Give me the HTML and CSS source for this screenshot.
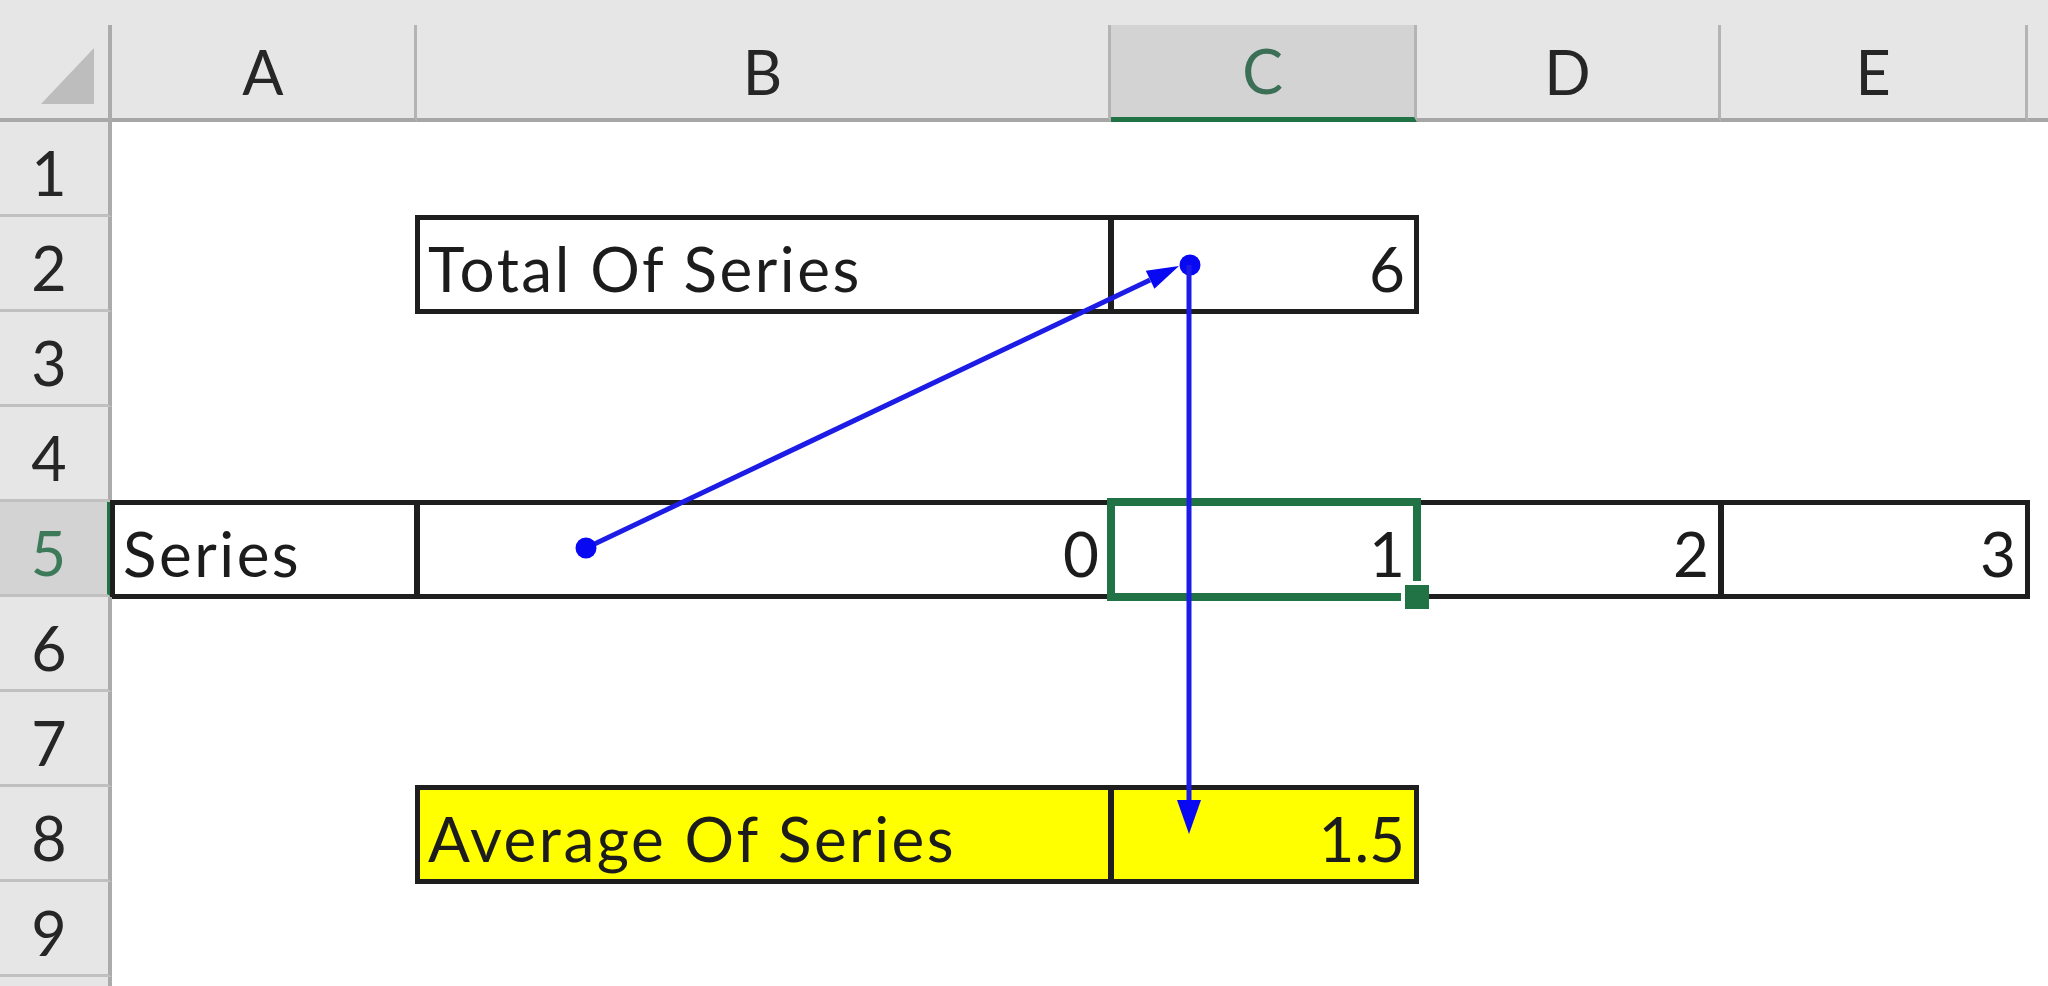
FILE: index.html
```html
<!DOCTYPE html>
<html>
<head>
<meta charset="utf-8">
<title>Sheet</title>
<link rel="stylesheet" href="styles.css">
</head>
<body>
<div class="sheet">
  <div class="topband"></div>
  <div class="grid">
    <div class="corner"><span class="tri"></span></div>
    <div class="ch">A</div>
    <div class="ch">B</div>
    <div class="ch on">C</div>
    <div class="ch">D</div>
    <div class="ch">E</div>
    <div class="ch"></div>

    <div class="rh">1</div>
    <div class="c"></div><div class="c"></div><div class="c"></div><div class="c"></div><div class="c"></div><div class="c"></div>

    <div class="rh">2</div>
    <div class="c"></div><div class="c b">Total Of Series</div><div class="c b n">6</div><div class="c"></div><div class="c"></div><div class="c"></div>

    <div class="rh">3</div>
    <div class="c"></div><div class="c"></div><div class="c"></div><div class="c"></div><div class="c"></div><div class="c"></div>

    <div class="rh">4</div>
    <div class="c"></div><div class="c"></div><div class="c"></div><div class="c"></div><div class="c"></div><div class="c"></div>

    <div class="rh on">5</div>
    <div class="c b">Series</div><div class="c b n">0</div><div class="c n sel">1<span class="handle"></span></div><div class="c b n">2</div><div class="c b n">3</div><div class="c"></div>

    <div class="rh">6</div>
    <div class="c"></div><div class="c"></div><div class="c"></div><div class="c"></div><div class="c"></div><div class="c"></div>

    <div class="rh">7</div>
    <div class="c"></div><div class="c"></div><div class="c"></div><div class="c"></div><div class="c"></div><div class="c"></div>

    <div class="rh">8</div>
    <div class="c"></div><div class="c b y">Average Of Series</div><div class="c b y n">1.5</div><div class="c"></div><div class="c"></div><div class="c"></div>

    <div class="rh">9</div>
    <div class="c"></div><div class="c"></div><div class="c"></div><div class="c"></div><div class="c"></div><div class="c"></div>

    <div class="rh"></div>
    <div class="c"></div><div class="c"></div><div class="c"></div><div class="c"></div><div class="c"></div><div class="c"></div>
  </div>

  <svg class="arrows" width="2048" height="986" viewBox="0 0 2048 986">
    <g fill="#0808f2" stroke="#1c1ce6">
      <line x1="586" y1="548" x2="1150" y2="280" stroke-width="5"/>
      <polygon points="1179,266 1154.4,288.7 1145.8,270.7" stroke="none"/>
      <circle cx="586" cy="548" r="10.5" stroke="none"/>
      <circle cx="1190" cy="265" r="10.5" stroke="none"/>
      <line x1="1189" y1="265" x2="1189" y2="802" stroke-width="5"/>
      <polygon points="1177,800 1201,800 1189,834" stroke="none"/>
    </g>
  </svg>
</div>
</body>
</html>
```

FILE: styles.css
```css
* { box-sizing: border-box; }

html, body {
  margin: 0;
  padding: 0;
}

body {
  width: 2048px;
  height: 986px;
  overflow: hidden;
  background: #ffffff;
  font-family: Lato, "Open Sans", sans-serif;
  color: #1c1c1c;
}

.sheet {
  position: relative;
  width: 2048px;
  height: 986px;
  overflow: hidden;
}

.topband {
  height: 25px;
  background: #e6e6e6;
}

.grid {
  display: grid;
  grid-template-columns: 112px 305px 694px 306px 304px 307px 1fr;
  grid-template-rows: 97px repeat(10, 95px);
}

.corner {
  background: #e6e6e6;
  border-right: 4px solid #ababab;
  border-bottom: 4px solid #a9a9a9;
  display: flex;
  align-items: flex-end;
  justify-content: flex-end;
  padding: 0 14px 14px 0;
}

.tri {
  width: 53px;
  height: 56px;
  background: #bdbdbd;
  clip-path: polygon(100% 0, 100% 100%, 0 100%);
}

.ch {
  background: #e6e6e6;
  border-right: 3px solid #b4b4b4;
  border-bottom: 4px solid #a6a6a6;
  display: flex;
  justify-content: center;
  align-items: flex-end;
  padding-bottom: 16px;
  font-size: 61px;
  line-height: 60px;
  color: #262626;
}

.ch.on {
  background: #d3d3d3;
  border-bottom: 5px solid #217346;
  color: #3b6f56;
}

.rh {
  background: #e6e6e6;
  border-right: 4px solid #ababab;
  border-bottom: 3px solid #c0c0c0;
  display: flex;
  justify-content: center;
  align-items: flex-end;
  padding: 0 10px 11px 0;
  font-size: 61px;
  line-height: 60px;
  color: #262626;
}

.rh.on {
  background: #d3d3d3;
  border-right: 5px solid #217346;
  color: #3c7a5a;
}

.c {
  display: flex;
  align-items: flex-end;
  padding: 0 12px 14px 11px;
  font-size: 62px;
  line-height: 60px;
  letter-spacing: 2.5px;
  white-space: nowrap;
}

.n {
  justify-content: flex-end;
  letter-spacing: 0;
}

.b {
  outline: 5px solid #1e1e1e;
  outline-offset: -3px;
}

.y { background: #ffff00; }

.sel {
  position: relative;
  z-index: 1;
  outline: 8px solid #217346;
  outline-offset: -4px;
}

.handle {
  position: absolute;
  right: -12px;
  bottom: -12px;
  width: 24px;
  height: 24px;
  box-sizing: content-box;
  background: #217346;
  border-top: 4px solid #ffffff;
  border-left: 4px solid #ffffff;
}

.arrows {
  position: absolute;
  top: 0;
  left: 0;
  z-index: 2;
  pointer-events: none;
}
```
